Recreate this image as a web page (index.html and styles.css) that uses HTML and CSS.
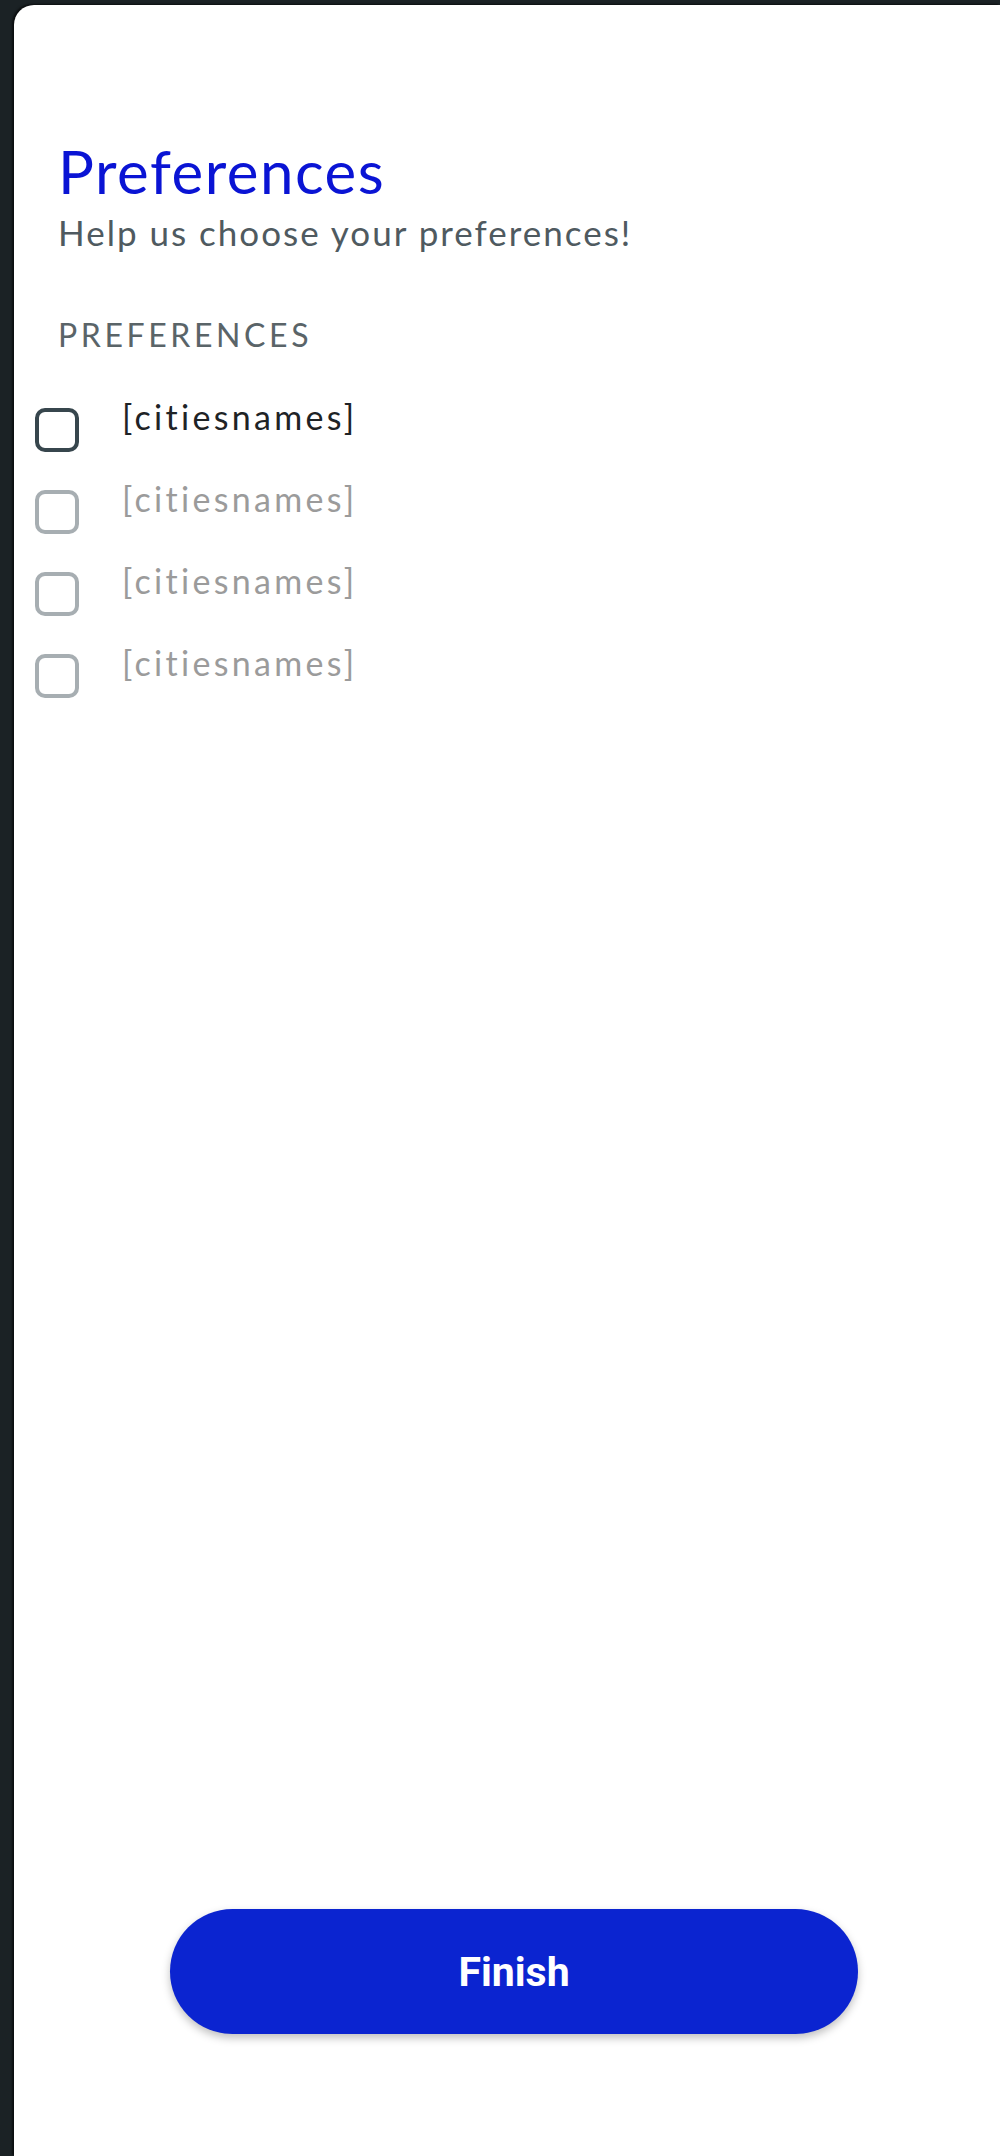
FILE: index.html
```html
<!DOCTYPE html>
<html lang="en">
<head>
<meta charset="utf-8">
<title>Preferences</title>
<link rel="stylesheet" href="styles.css">
</head>
<body>
<main class="panel">
  <header class="intro">
    <h1 class="title">Preferences</h1>
    <p class="subtitle">Help us choose your preferences!</p>
  </header>
  <h2 class="section-label">PREFERENCES</h2>
  <ul class="options">
    <li class="option option--active"><span class="box"></span><span class="option-text">[citiesnames]</span></li>
    <li class="option"><span class="box"></span><span class="option-text">[citiesnames]</span></li>
    <li class="option"><span class="box"></span><span class="option-text">[citiesnames]</span></li>
    <li class="option"><span class="box"></span><span class="option-text">[citiesnames]</span></li>
  </ul>
  <div class="actions">
    <button class="finish" type="button">Finish</button>
  </div>
</main>
</body>
</html>
```

FILE: styles.css
```css
html, body {
  margin: 0;
  padding: 0;
}

body {
  background: #1b2225;
  font-family: "Lato", "Liberation Sans", sans-serif;
  height: 2156px;
  overflow: hidden;
}

.panel {
  box-sizing: border-box;
  margin: 5px 0 0 14px;
  height: 2151px;
  background: #ffffff;
  border-top-left-radius: 20px;
  box-shadow: -2px -1px 2px rgba(0, 0, 0, 0.6);
  display: flex;
  flex-direction: column;
  padding: 130px 0 122px 0;
}

.intro {
  padding-left: 44px;
}

.title {
  margin: 0;
  font-size: 60px;
  line-height: 1.2;
  font-weight: 400;
  color: #0a14d4;
  letter-spacing: 1.5px;
}

.subtitle {
  margin: 4px 0 0 0;
  font-size: 35px;
  line-height: 1.2;
  color: #4f5a60;
  letter-spacing: 2px;
}

.section-label {
  margin: 63px 0 0 0;
  padding-left: 44px;
  font-size: 32px;
  line-height: 1.2;
  font-weight: 400;
  color: #5a6468;
  letter-spacing: 3.6px;
}

.options {
  list-style: none;
  margin: 54px 0 0 0;
  padding: 0 0 0 21px;
  display: flex;
  flex-direction: column;
}

.option {
  display: flex;
  align-items: flex-start;
  height: 82px;
  gap: 43px;
}

.box {
  box-sizing: border-box;
  width: 44px;
  height: 44px;
  border: 4px solid #a7aeb2;
  border-radius: 10px;
  flex: none;
}

.option-text {
  font-size: 34px;
  line-height: 28px;
  margin-top: -5px;
  color: #9b9b9b;
  letter-spacing: 3.3px;
}

.option--active .box {
  border-color: #37464d;
}

.option--active .option-text {
  color: #1e2326;
}

.actions {
  margin-top: auto;
  padding-left: 156px;
}

.finish {
  display: block;
  width: 688px;
  height: 125px;
  border: none;
  border-radius: 62.5px;
  background: #0b24d0;
  color: #ffffff;
  font-family: "Roboto", "Liberation Sans", sans-serif;
  font-weight: 700;
  font-size: 41px;
  box-shadow: 0 4px 8px rgba(0, 0, 0, 0.25);
  padding: 0;
}
```
